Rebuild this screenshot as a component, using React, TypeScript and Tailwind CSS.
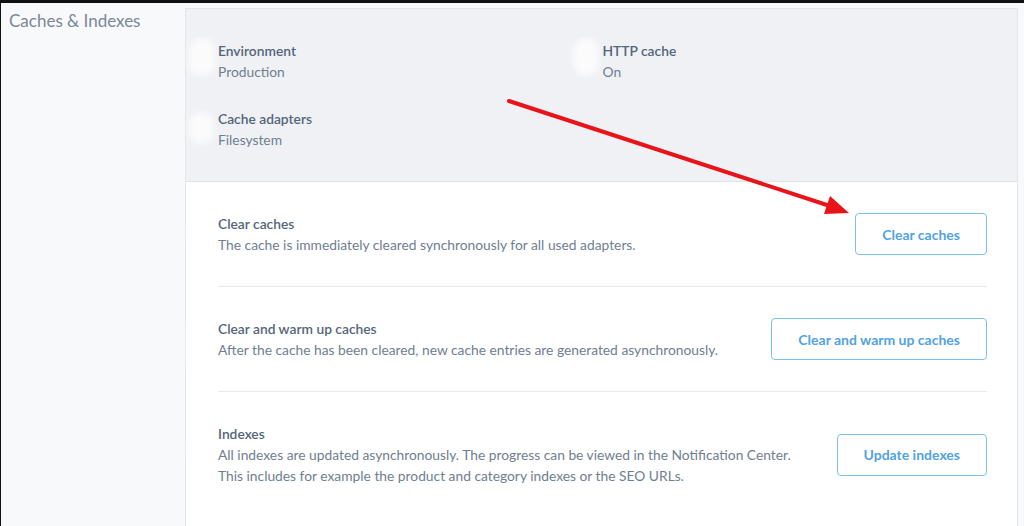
import React from "react";

const font = { fontFamily: "Lato, 'Open Sans', sans-serif" };

function Glow({ className }: { className: string }) {
    // faint blurry blobs left of each entry in the original capture
    return <div className={`pointer-events-none absolute rounded-full bg-white/70 blur-[3px] ${className}`} />;
}

function InfoItem({ label, value, glow }: { label: string; value: string; glow: string }) {
    return (
        <div className="relative leading-[21px]">
            <Glow className={glow} />
            <div className="relative font-semibold text-[#55657a]">{label}</div>
            <div className="relative text-[#6f7e90]">{value}</div>
        </div>
    );
}

function ActionRow({ label, lines, button, glow }: { label: string; lines: string[]; button: string; glow: string }) {
    return (
        <div className="flex items-center justify-between py-[31px]">
            <div className="relative leading-[21px]">
                <Glow className={glow} />
                <div className="relative font-semibold text-[#55657a]">{label}</div>
                {lines.map((l) => (
                    <div key={l} className="relative text-[#6f7e90]">{l}</div>
                ))}
            </div>
            <button className="h-[42px] rounded-[4px] border border-[#7cc0ec] bg-white px-[26px] text-[14px] font-bold text-[#51a2e2]">
                {button}
            </button>
        </div>
    );
}

export default function App() {
    return (
        <div className="relative h-[526px] w-[1024px] overflow-hidden border-t-[3px] border-l border-[#111] bg-[#f8f9fb] text-[13.8px]" style={font}>
            <div className="flex">
                {/* left label column */}
                <div className="w-[184px] shrink-0 pl-2 pt-[5px]">
                    <h2 className="text-[17px] text-[#7b8797]">Caches &amp; Indexes</h2>
                </div>

                {/* card */}
                <div className="mt-[5px] w-[833px] shrink-0 border border-[#e3e6eb] bg-white pb-6">
                    <div className="grid grid-cols-2 gap-y-[26px] border-b border-[#e0e3e8] bg-[#f0f1f5] pb-[31px] pl-[32px] pr-[30px] pt-[31px]">
                        <InfoItem label="Environment" value="Production" glow="-left-[30px] top-[-2px] h-[38px] w-[28px]" />
                        <InfoItem label="HTTP cache" value="On" glow="-left-[30px] top-[-2px] h-[38px] w-[26px]" />
                        <InfoItem label="Cache adapters" value="Filesystem" glow="-left-[30px] top-[4px] h-[32px] w-[26px]" />
                    </div>

                    <div className="pl-[32px] pr-[30px]">
                        <ActionRow
                            label="Clear caches"
                            lines={["The cache is immediately cleared synchronously for all used adapters."]}
                            button="Clear caches"
                            glow="-left-[30px] top-[6px] h-[28px] w-[26px]"
                        />
                        <div className="h-px bg-[#e6e9ed]" />
                        <ActionRow
                            label="Clear and warm up caches"
                            lines={["After the cache has been cleared, new cache entries are generated asynchronously."]}
                            button="Clear and warm up caches"
                            glow="-left-[30px] top-[-2px] h-[58px] w-[24px]"
                        />
                        <div className="h-px bg-[#e6e9ed]" />
                        <ActionRow
                            label="Indexes"
                            lines={[
                                "All indexes are updated asynchronously. The progress can be viewed in the Notification Center.",
                                "This includes for example the product and category indexes or the SEO URLs.",
                            ]}
                            button="Update indexes"
                            glow="-left-[30px] top-[14px] h-[26px] w-[26px]"
                        />
                    </div>
                </div>
            </div>

            {/* red annotation arrow */}
            <svg className="pointer-events-none absolute left-[-1px] top-[-3px]" width="1024" height="526" viewBox="0 0 1024 526">
                <line x1="509" y1="101" x2="830" y2="206" stroke="#e8141a" strokeWidth="4" strokeLinecap="round" />
                <polygon points="849,213 824,214 830,196" fill="#e8141a" />
            </svg>
        </div>
    );
}
